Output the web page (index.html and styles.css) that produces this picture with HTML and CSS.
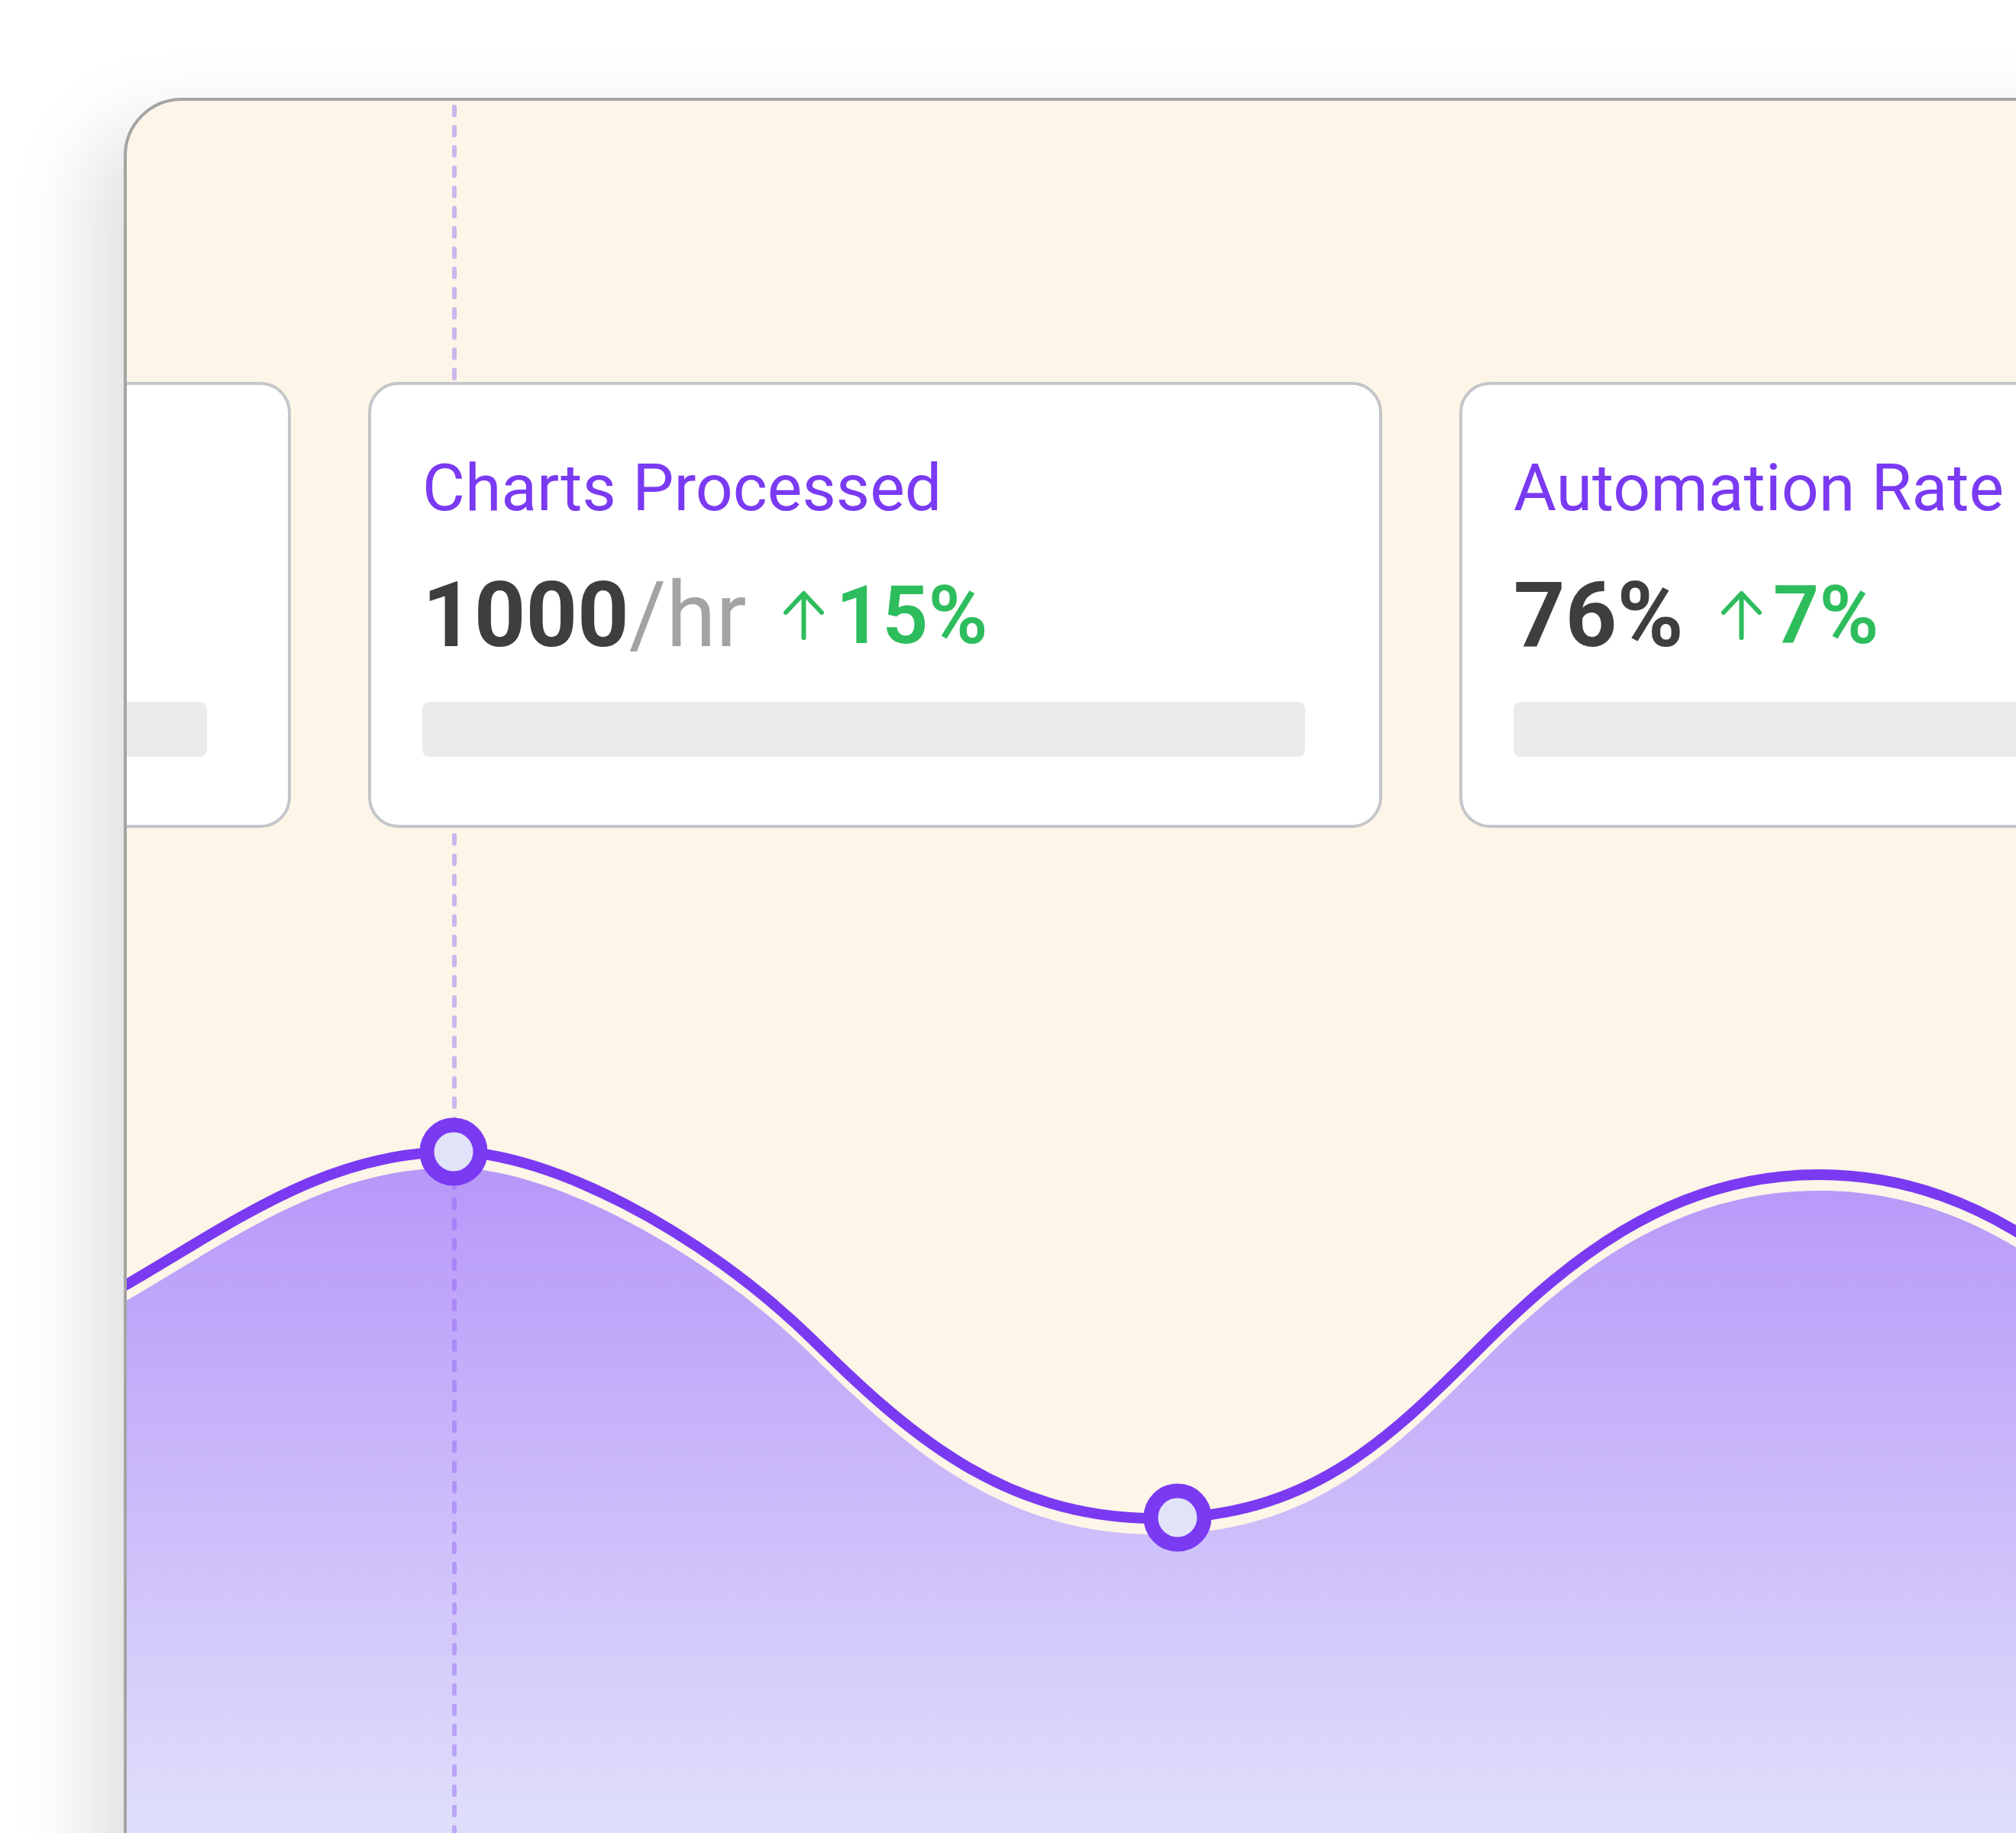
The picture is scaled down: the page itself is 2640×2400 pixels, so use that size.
FILE: index.html
```html
<!DOCTYPE html>
<html lang="en">
<head>
<meta charset="utf-8">
<title>Metrics</title>
<link rel="stylesheet" href="styles.css">
</head>
<body>
<div class="frame">
  <svg class="chart" viewBox="166 132 2600 2400" xmlns="http://www.w3.org/2000/svg" aria-hidden="true">
    <defs>
      <linearGradient id="areaFill" gradientUnits="userSpaceOnUse" x1="0" y1="1528" x2="0" y2="2400">
        <stop offset="0" stop-color="#b899f9"/>
        <stop offset="1" stop-color="#e1e1fb"/>
      </linearGradient>
    </defs>
    <path class="area" transform="translate(0 21)" d="M-50 1805 L150 1691 C300 1605.5 424 1508 594 1508 C714 1508 915 1608 1065 1755 C1185 1873 1312 1988 1512 1988 C1712 1988 1815 1888 1935 1768 C2045 1658 2182 1538 2382 1538 C2582 1538 2719 1658 2829 1768 C2900 1840 3000 1950 3200 1950 L3200 2700 L-50 2700 Z"/>
    <line class="guide" x1="595" y1="140" x2="595" y2="2600"/>
    <path class="curve" d="M-50 1805 L150 1691 C300 1605.5 424 1508 594 1508 C714 1508 915 1608 1065 1755 C1185 1873 1312 1988 1512 1988 C1712 1988 1815 1888 1935 1768 C2045 1658 2182 1538 2382 1538 C2582 1538 2719 1658 2829 1768 C2900 1840 3000 1950 3200 1950"/>
    <circle class="dot" cx="594" cy="1508" r="35"/>
    <circle class="dot" cx="1542" cy="1987" r="35"/>
  </svg>

  <div class="cards">
    <div class="card card-edge">
      <div class="card-title"></div>
      <div class="card-value"></div>
      <div class="bar"></div>
    </div>
    <div class="card">
      <div class="card-title">Charts Processed</div>
      <div class="card-value"><span class="num">1000</span><span class="unit">/hr</span><span class="delta"><svg class="arrow" viewBox="0 0 55 66" xmlns="http://www.w3.org/2000/svg"><path d="M27.5 4 V62 M4 29 L27.5 4 L51 29"/></svg><span class="delta-num">15%</span></span></div>
      <div class="bar"></div>
    </div>
    <div class="card">
      <div class="card-title">Automation Rate</div>
      <div class="card-value"><span class="num">76%</span><span class="delta"><svg class="arrow" viewBox="0 0 55 66" xmlns="http://www.w3.org/2000/svg"><path d="M27.5 4 V62 M4 29 L27.5 4 L51 29"/></svg><span class="delta-num">7%</span></span></div>
      <div class="bar"></div>
    </div>
  </div>
</div>
</body>
</html>
```

FILE: styles.css
```css
html, body {
  margin: 0;
  overflow: hidden;
  background: #ffffff;
}

body {
  padding: 128px 0 0 162px;
  font-family: Roboto, "Liberation Sans", sans-serif;
}

.frame {
  position: relative;
  width: 2700px;
  height: 2500px;
  box-sizing: border-box;
  border: 4px solid #a4a4a4;
  border-radius: 76px;
  background: #fdf5e7;
  overflow: hidden;
  box-shadow: -40px 40px 110px rgba(0, 0, 0, 0.13);
}

.chart {
  position: absolute;
  left: 0;
  top: 0;
  width: 2600px;
  height: 2400px;
  z-index: 0;
}

.area {
  fill: url(#areaFill);
}

.guide {
  stroke: rgba(139, 92, 246, 0.42);
  stroke-width: 6;
  stroke-dasharray: 10.5 16;
  stroke-linecap: round;
}

.curve {
  fill: none;
  stroke: #7a3af2;
  stroke-width: 14;
}

.dot {
  fill: #e1e3f8;
  stroke: #7a3af2;
  stroke-width: 19;
}

.cards {
  position: relative;
  z-index: 1;
  display: flex;
  gap: 101px;
  margin: 368px 0 0 -1113px;
}

.card {
  flex: 0 0 1328px;
  height: 584px;
  box-sizing: border-box;
  padding: 92px 97px 0 67px;
  background: #ffffff;
  border: 4px solid #c4c6c9;
  border-radius: 40px;
  display: flex;
  flex-direction: column;
}

.card-edge {
  padding-right: 106px;
}

.card-title {
  min-height: 86px;
  font-size: 86px;
  line-height: 1;
  color: #7a3af2;
  white-space: nowrap;
}

.card-value {
  min-height: 118px;
  margin-top: 65px;
  font-size: 118px;
  line-height: 1;
  white-space: nowrap;
}

.num {
  font-weight: 700;
  color: #3e3e3e;
}

.unit {
  font-weight: 400;
  color: #a3a3a3;
}

.delta {
  color: #2ebd5d;
}

.arrow {
  width: 55px;
  height: 66px;
  margin-left: 48px;
  margin-right: 14px;
  vertical-align: 7px;
  fill: none;
  stroke: #2ebd5d;
  stroke-width: 6;
  stroke-linecap: round;
  stroke-linejoin: round;
}

.delta-num {
  display: inline-block;
  font-size: 106px;
  font-weight: 600;
  vertical-align: 4px;
}

.bar {
  margin-top: 54px;
  height: 72px;
  border-radius: 9px;
  background: #ebebeb;
}
```
